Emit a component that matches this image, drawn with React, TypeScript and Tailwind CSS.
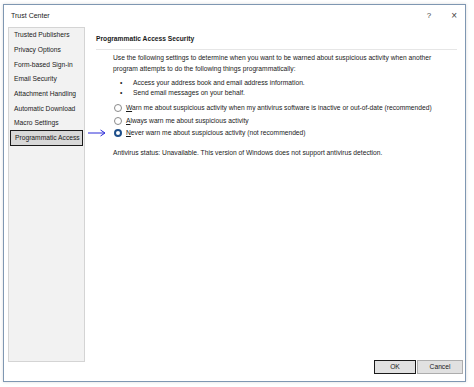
import React from "react";

const font = { fontFamily: '"Liberation Sans", Arial, sans-serif' };

function Radio({ checked }: { checked?: boolean }) {
  return checked ? (
    <span className="w-[8px] h-[8px] rounded-full border-[2px] border-[#1e4f8a] bg-white shrink-0" />
  ) : (
    <span className="w-[8px] h-[8px] rounded-full border border-[#8a8a8a] bg-white shrink-0" />
  );
}

export default function App() {
  const items = [
    "Trusted Publishers",
    "Privacy Options",
    "Form-based Sign-in",
    "Email Security",
    "Attachment Handling",
    "Automatic Download",
    "Macro Settings",
    "Programmatic Access",
  ];
  return (
    <div className="w-[474px] h-[387px] bg-white overflow-hidden pt-[4px] pl-[3px] text-[#1a1a1a]" style={font}>
      <div className="w-[463px] h-[378px] border border-[#7f97b2] bg-white flex flex-col shadow-[0_0_3px_rgba(0,0,0,0.15)]">
        <div className="h-[22px] shrink-0 flex items-center pl-[7px] pr-[8px] text-[7px]">
          <span>Trust Center</span>
          <span className="ml-auto mr-[20px] text-[8px] text-[#444]">?</span>
          <span className="text-[10px] text-[#444] leading-none">×</span>
        </div>
        <div className="flex flex-1 min-h-0">
          <div className="ml-[4px] w-[77px] h-[335px] bg-[#f2f2f2] border border-[#d4d4d4] shrink-0">
            {items.map((t, i) =>
              i === 7 ? (
                <div key={t} className="mx-[1px] -mt-[1px] h-[16px] border-[1.5px] border-[#1a1a1a] bg-[#d8d8d8] flex items-center pl-[4px] text-[6.7px] whitespace-nowrap">
                  {t}
                </div>
              ) : (
                <div key={t} className="h-[14.7px] flex items-center pl-[5px] text-[6.7px] whitespace-nowrap">
                  {t}
                </div>
              )
            )}
          </div>
          <div className="flex-1 pl-[11px] pr-[8px] pt-[7px] text-[6.7px]">
            <div className="font-bold pb-[5px] border-b border-[#e6e6e6]">Programmatic Access Security</div>
            <div className="pl-[17px] pt-[2px]">
              <p className="leading-[11px] pr-[10px]">
                Use the following settings to determine when you want to be warned about suspicious activity when another program attempts to do the following things programmatically:
              </p>
              <ul className="mt-[4px] pl-[7px] leading-[10px]">
                <li className="flex"><span className="w-[13px]">•</span>Access your address book and email address information.</li>
                <li className="flex"><span className="w-[13px]">•</span>Send email messages on your behalf.</li>
              </ul>
              <div className="mt-[5px] flex flex-col gap-[2.5px] ml-[1px]">
                <div className="flex items-center gap-[4px] h-[10px] whitespace-nowrap"><Radio /><span><u>W</u>arn me about suspicious activity when my antivirus software is inactive or out-of-date (recommended)</span></div>
                <div className="flex items-center gap-[4px] h-[10px] whitespace-nowrap"><Radio /><span><u>A</u>lways warn me about suspicious activity</span></div>
                <div className="relative flex items-center gap-[4px] h-[10px] whitespace-nowrap">
                  <svg className="absolute left-[-27px] top-[1px]" width="19" height="8" viewBox="0 0 19 8">
                    <line x1="1" y1="4" x2="17.5" y2="4" stroke="#2a2ad8" strokeWidth="1" />
                    <path d="M13.5 1 L18 4 L13.5 7" fill="none" stroke="#2a2ad8" strokeWidth="1" />
                  </svg>
                  <Radio checked /><span><u>N</u>ever warn me about suspicious activity (not recommended)</span>
                </div>
              </div>
              <p className="mt-[10px]">Antivirus status: Unavailable. This version of Windows does not support antivirus detection.</p>
            </div>
          </div>
        </div>
        <div className="h-[21px] shrink-0 flex justify-end items-start pr-[2px] gap-[1px] text-[6.7px]">
          <button className="w-[42px] h-[14px] border border-[#1a1a1a] bg-[#e1e1e1] flex items-center justify-center">OK</button>
          <button className="w-[46px] h-[14px] border border-[#adadad] bg-[#e1e1e1] flex items-center justify-center">Cancel</button>
        </div>
      </div>
    </div>
  );
}
